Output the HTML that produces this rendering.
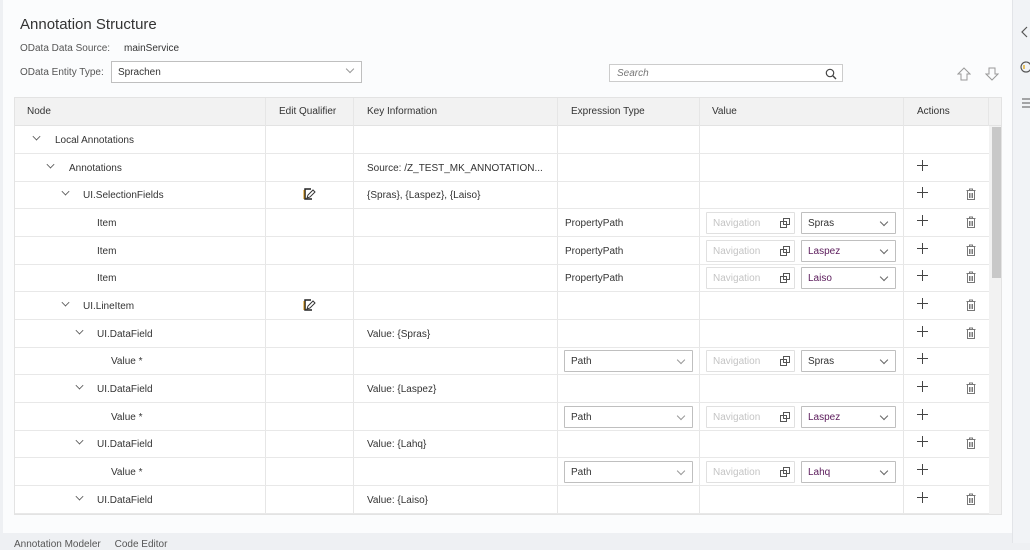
<!DOCTYPE html>
<html><head><meta charset="utf-8"><style>
*{box-sizing:border-box;margin:0;padding:0}
body{width:1030px;height:543px;overflow:hidden;background:#eef0f3;font-family:"Liberation Sans",Arial,sans-serif;color:#333;position:relative}
.panel{position:absolute;left:3px;top:0;width:1009px;height:533px;background:#fbfcfd}
.side{position:absolute;left:1012px;top:0;width:18px;height:543px;background:#f1f3f6;border-left:1px solid #e2e4e8}
.a{position:absolute}
.t{font-size:10px;white-space:nowrap}
.tbl{position:absolute;left:14px;top:97px;width:988px;height:418px;border:1px solid #e3e3e3;background:#fff;overflow:hidden}
.hd{position:absolute;left:0;top:0;width:988px;height:28px;background:#f2f2f2;border-bottom:1px solid #e3e3e3}
.vl{position:absolute;top:0;width:1px;height:418px;background:#e6e6e6}
.row{position:absolute;left:0;width:974px;height:28px;border-bottom:1px solid #e8e8e8}
.row .t{position:absolute;top:9px}
.chev{position:absolute;top:7px;width:7px;height:7px;border-right:1.3px solid #555;border-bottom:1.3px solid #555;transform:rotate(45deg) scale(.8)}
.ctl{position:absolute;top:3px;height:22px;border:1px solid #bfbfbf;background:#fff;border-radius:1px}
.ctl .t{top:5px;left:6px}
.nav{border-color:#e0e0e0}
.nav .t{color:#c4c4c4}
.dd{position:absolute;top:6px;width:6px;height:6px;border-right:1px solid #666;border-bottom:1px solid #666;transform:rotate(45deg)}
.plus{position:absolute;top:6px;left:902px;width:10px;height:10px}
.plus:before{content:"";position:absolute;left:0;top:4.5px;width:11px;height:1.3px;background:#444}
.plus:after{content:"";position:absolute;left:4.8px;top:0;width:1.3px;height:11px;background:#444}
.trash{position:absolute;top:7px;left:951px}
.trash path{stroke:#777}
.pur{color:#5a1a5a}
</style></head><body>
<div class="panel"></div>
<div class="side">
<svg width="18" height="120" style="position:absolute;left:0;top:0"><path d="M14 27 L9 32 L14 37" fill="none" stroke="#555" stroke-width="1.2"/><path d="M13 62 a5 5 0 1 0 0.1 0" fill="none" stroke="#555" stroke-width="1.2"/><path d="M11 65 v4" stroke="#e0a000" stroke-width="1.2"/><path d="M9 99h8M9 103h8M9 107h8" stroke="#555" stroke-width="1"/></svg>
</div>
<div class="a" style="left:20px;top:16px;font-size:15px;color:#333">Annotation Structure</div>
<div class="a t" style="left:20px;top:43px;color:#555">OData Data Source:</div>
<div class="a t" style="left:124px;top:43px">mainService</div>
<div class="a t" style="left:20px;top:67px;color:#555">OData Entity Type:</div>
<div class="a" style="left:111px;top:61px;width:251px;height:22px;border:1px solid #bfbfbf;background:#fff"><span class="a t" style="left:6px;top:5px">Sprachen</span><span class="dd" style="left:235px;top:4px;border-color:#999"></span></div>
<div class="a" style="left:609px;top:64px;width:234px;height:18px;border:1px solid #ccc;background:#fff"><span class="a t" style="left:7px;top:3px;color:#777;font-style:italic">Search</span>
<svg class="a" style="left:215px;top:3px" width="12" height="12"><circle cx="5" cy="5" r="3.7" fill="none" stroke="#444" stroke-width="1.2"/><path d="M7.8 7.8L11 11" stroke="#444" stroke-width="1.4"/></svg></div>
<svg class="a" style="left:957px;top:67px" width="14" height="14"><path d="M7 1L13 7H10V13H4V7H1Z" fill="none" stroke="#999" stroke-width="1"/></svg>
<svg class="a" style="left:985px;top:67px" width="14" height="14"><path d="M7 13L13 7H10V1H4V7H1Z" fill="none" stroke="#999" stroke-width="1"/></svg>

<div class="tbl">
<div class="hd">
<span class="a t" style="left:12px;top:8px">Node</span>
<span class="a t" style="left:264px;top:8px">Edit Qualifier</span>
<span class="a t" style="left:352px;top:8px">Key Information</span>
<span class="a t" style="left:556px;top:8px">Expression Type</span>
<span class="a t" style="left:697px;top:8px">Value</span>
<span class="a t" style="left:902px;top:8px">Actions</span>
</div>
<div class="vl" style="left:250px"></div><div class="vl" style="left:338px"></div><div class="vl" style="left:542px"></div><div class="vl" style="left:684px"></div><div class="vl" style="left:888px"></div><div class="vl" style="left:973px;height:28px"></div>
<div class="a" style="left:974px;top:28px;width:14px;height:390px;background:#f2f2f2"></div>
<div class="a" style="left:977px;top:29px;width:10px;height:151px;background:#c8c8c8"></div>

<div class="row" style="top:28px"><span class="chev" style="left:18px"></span><span class="t" style="left:40px">Local Annotations</span></div>
<div class="row" style="top:56px"><span class="chev" style="left:32px"></span><span class="t" style="left:54px">Annotations</span><span class="t" style="left:352px">Source: /Z_TEST_MK_ANNOTATION...</span><span class="plus"></span></div>
<div class="row" style="top:83px"><span class="chev" style="left:47px"></span><span class="t" style="left:68px">UI.SelectionFields</span>
<svg class="a" style="left:287px;top:6px" width="14" height="14"><path d="M9 2H3V12H10" fill="none" stroke="#222" stroke-width="1.5"/><path d="M2 3V12" stroke="#d08a00" stroke-width="1"/><path d="M5 11L6 8L11 3L13 5L8 10Z" fill="#fff" stroke="#333" stroke-width="1"/></svg>
<span class="t" style="left:352px">{Spras}, {Laspez}, {Laiso}</span><span class="plus"></span>
<svg class="trash" width="10" height="12"><path d="M0.5 2.5H9.5M3.5 2.5V1H6.5V2.5M1.5 2.5V11.5H8.5V2.5M3.5 5V10M5 5V10M6.5 5V10" fill="none" stroke-width="1"/></svg></div>

<div class="row" style="top:111px"><span class="t" style="left:82px">Item</span><span class="t" style="left:550px">PropertyPath</span>
<div class="ctl nav" style="left:691px;width:89px"><span class="a t">Navigation</span><svg class="a" style="left:73px;top:5px" width="10" height="10"><path d="M3.5 0.5H9.5V6.5H3.5Z M0.5 3.5H6.5V9.5H0.5Z" fill="#fff" stroke="#555"/></svg></div>
<div class="ctl" style="left:786px;width:95px"><span class="a t">Spras</span><span class="dd" style="left:79px"></span></div>
<span class="plus"></span><svg class="trash" width="10" height="12"><path d="M0.5 2.5H9.5M3.5 2.5V1H6.5V2.5M1.5 2.5V11.5H8.5V2.5M3.5 5V10M5 5V10M6.5 5V10" fill="none" stroke-width="1"/></svg></div>

<div class="row" style="top:139px"><span class="t" style="left:82px">Item</span><span class="t" style="left:550px">PropertyPath</span>
<div class="ctl nav" style="left:691px;width:89px"><span class="a t">Navigation</span><svg class="a" style="left:73px;top:5px" width="10" height="10"><path d="M3.5 0.5H9.5V6.5H3.5Z M0.5 3.5H6.5V9.5H0.5Z" fill="#fff" stroke="#555"/></svg></div>
<div class="ctl" style="left:786px;width:95px"><span class="a t pur">Laspez</span><span class="dd" style="left:79px"></span></div>
<span class="plus"></span><svg class="trash" width="10" height="12"><path d="M0.5 2.5H9.5M3.5 2.5V1H6.5V2.5M1.5 2.5V11.5H8.5V2.5M3.5 5V10M5 5V10M6.5 5V10" fill="none" stroke-width="1"/></svg></div>

<div class="row" style="top:166px"><span class="t" style="left:82px">Item</span><span class="t" style="left:550px">PropertyPath</span>
<div class="ctl nav" style="left:691px;width:89px"><span class="a t">Navigation</span><svg class="a" style="left:73px;top:5px" width="10" height="10"><path d="M3.5 0.5H9.5V6.5H3.5Z M0.5 3.5H6.5V9.5H0.5Z" fill="#fff" stroke="#555"/></svg></div>
<div class="ctl" style="left:786px;width:95px"><span class="a t pur">Laiso</span><span class="dd" style="left:79px"></span></div>
<span class="plus"></span><svg class="trash" width="10" height="12"><path d="M0.5 2.5H9.5M3.5 2.5V1H6.5V2.5M1.5 2.5V11.5H8.5V2.5M3.5 5V10M5 5V10M6.5 5V10" fill="none" stroke-width="1"/></svg></div>

<div class="row" style="top:194px"><span class="chev" style="left:47px"></span><span class="t" style="left:68px">UI.LineItem</span>
<svg class="a" style="left:287px;top:6px" width="14" height="14"><path d="M9 2H3V12H10" fill="none" stroke="#222" stroke-width="1.5"/><path d="M2 3V12" stroke="#d08a00" stroke-width="1"/><path d="M5 11L6 8L11 3L13 5L8 10Z" fill="#fff" stroke="#333" stroke-width="1"/></svg>
<span class="plus"></span><svg class="trash" width="10" height="12"><path d="M0.5 2.5H9.5M3.5 2.5V1H6.5V2.5M1.5 2.5V11.5H8.5V2.5M3.5 5V10M5 5V10M6.5 5V10" fill="none" stroke-width="1"/></svg></div>

<div class="row" style="top:222px"><span class="chev" style="left:61px"></span><span class="t" style="left:82px">UI.DataField</span><span class="t" style="left:352px">Value: {Spras}</span>
<span class="plus"></span><svg class="trash" width="10" height="12"><path d="M0.5 2.5H9.5M3.5 2.5V1H6.5V2.5M1.5 2.5V11.5H8.5V2.5M3.5 5V10M5 5V10M6.5 5V10" fill="none" stroke-width="1"/></svg></div>

<div class="row" style="top:249px"><span class="t" style="left:96px">Value *</span>
<div class="ctl" style="left:549px;width:129px"><span class="a t">Path</span><span class="dd" style="left:113px;border-color:#999"></span></div>
<div class="ctl nav" style="left:691px;width:89px"><span class="a t">Navigation</span><svg class="a" style="left:73px;top:5px" width="10" height="10"><path d="M3.5 0.5H9.5V6.5H3.5Z M0.5 3.5H6.5V9.5H0.5Z" fill="#fff" stroke="#555"/></svg></div>
<div class="ctl" style="left:786px;width:95px"><span class="a t">Spras</span><span class="dd" style="left:79px"></span></div>
<span class="plus"></span></div>

<div class="row" style="top:277px"><span class="chev" style="left:61px"></span><span class="t" style="left:82px">UI.DataField</span><span class="t" style="left:352px">Value: {Laspez}</span>
<span class="plus"></span><svg class="trash" width="10" height="12"><path d="M0.5 2.5H9.5M3.5 2.5V1H6.5V2.5M1.5 2.5V11.5H8.5V2.5M3.5 5V10M5 5V10M6.5 5V10" fill="none" stroke-width="1"/></svg></div>

<div class="row" style="top:305px"><span class="t" style="left:96px">Value *</span>
<div class="ctl" style="left:549px;width:129px"><span class="a t">Path</span><span class="dd" style="left:113px;border-color:#999"></span></div>
<div class="ctl nav" style="left:691px;width:89px"><span class="a t">Navigation</span><svg class="a" style="left:73px;top:5px" width="10" height="10"><path d="M3.5 0.5H9.5V6.5H3.5Z M0.5 3.5H6.5V9.5H0.5Z" fill="#fff" stroke="#555"/></svg></div>
<div class="ctl" style="left:786px;width:95px"><span class="a t pur">Laspez</span><span class="dd" style="left:79px"></span></div>
<span class="plus"></span></div>

<div class="row" style="top:332px"><span class="chev" style="left:61px"></span><span class="t" style="left:82px">UI.DataField</span><span class="t" style="left:352px">Value: {Lahq}</span>
<span class="plus"></span><svg class="trash" width="10" height="12"><path d="M0.5 2.5H9.5M3.5 2.5V1H6.5V2.5M1.5 2.5V11.5H8.5V2.5M3.5 5V10M5 5V10M6.5 5V10" fill="none" stroke-width="1"/></svg></div>

<div class="row" style="top:360px"><span class="t" style="left:96px">Value *</span>
<div class="ctl" style="left:549px;width:129px"><span class="a t">Path</span><span class="dd" style="left:113px;border-color:#999"></span></div>
<div class="ctl nav" style="left:691px;width:89px"><span class="a t">Navigation</span><svg class="a" style="left:73px;top:5px" width="10" height="10"><path d="M3.5 0.5H9.5V6.5H3.5Z M0.5 3.5H6.5V9.5H0.5Z" fill="#fff" stroke="#555"/></svg></div>
<div class="ctl" style="left:786px;width:95px"><span class="a t pur">Lahq</span><span class="dd" style="left:79px"></span></div>
<span class="plus"></span></div>

<div class="row" style="top:388px"><span class="chev" style="left:61px"></span><span class="t" style="left:82px">UI.DataField</span><span class="t" style="left:352px">Value: {Laiso}</span>
<span class="plus"></span><svg class="trash" width="10" height="12"><path d="M0.5 2.5H9.5M3.5 2.5V1H6.5V2.5M1.5 2.5V11.5H8.5V2.5M3.5 5V10M5 5V10M6.5 5V10" fill="none" stroke-width="1"/></svg></div>
</div>
<div class="a t" style="left:14px;top:539px;color:#555">Annotation Modeler &nbsp;&nbsp;&nbsp; Code Editor</div>
</body></html>
